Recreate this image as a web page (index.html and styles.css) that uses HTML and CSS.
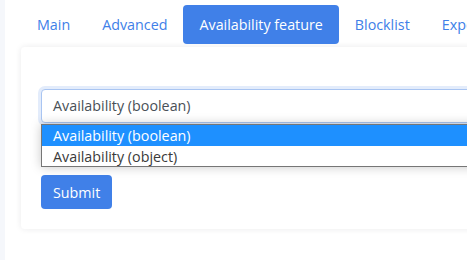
FILE: index.html
```html
<!DOCTYPE html>
<html lang="en">
<head>
<meta charset="utf-8">
<title>Availability feature</title>
<link rel="stylesheet" href="styles.css">
</head>
<body>
<div class="page">
  <div class="edge"></div>
  <main class="content">
    <ul class="tabs">
      <li><a class="tab" href="#">Main</a></li>
      <li><a class="tab" href="#">Advanced</a></li>
      <li><a class="tab active" href="#">Availability feature</a></li>
      <li><a class="tab" href="#">Blocklist</a></li>
      <li><a class="tab" href="#">Experimental</a></li>
    </ul>
    <section class="card">
      <form class="form">
        <div class="field">
          <div class="select">Availability (boolean)</div>
          <div class="popup">
            <div class="option selected">Availability (boolean)</div>
            <div class="option">Availability (object)</div>
          </div>
        </div>
        <button type="button" class="btn">Submit</button>
      </form>
    </section>
  </main>
</div>
</body>
</html>
```
FILE: styles.css
```css
html, body {
  margin: 0;
  padding: 0;
  background: #ffffff;
  overflow: hidden;
}
body {
  font-family: "Open Sans", "Noto Sans", "Liberation Sans", sans-serif;
  font-size: 14.3px;
  color: #495057;
}
.page {
  display: flex;
  width: 700px;
  height: 260px;
}
.edge {
  width: 5px;
  flex: none;
  background: #f5f7fb;
}
.content {
  flex: 1;
  padding: 5px 0 0 16px;
  background: #ffffff;
}
.tabs {
  list-style: none;
  margin: 0;
  padding: 0;
  display: flex;
}
.tab {
  display: block;
  padding: 0 16px;
  height: 39px;
  line-height: 39px;
  color: #4080e8;
  text-decoration: none;
  border-radius: 4px;
}
.tab.active {
  background: #4080e8;
  color: #ffffff;
}
.card {
  margin-top: 3px;
  background: #ffffff;
  border-radius: 4px;
  box-shadow: 0 0 6px rgba(33, 37, 41, 0.09);
  padding: 42px 20px 20px 20px;
}
.form {
  display: flex;
  flex-direction: column;
  align-items: flex-start;
}
.field {
  position: relative;
  align-self: stretch;
  margin-bottom: 52px;
}
.select {
  height: 32px;
  line-height: 32px;
  padding-left: 11px;
  border: 1px solid #a9c5f2;
  border-radius: 4px;
  box-shadow: 0 0 0 3px #e3ecfb;
  color: #495057;
  background: #ffffff;
}
.popup {
  position: absolute;
  left: 0;
  right: 0;
  top: 35px;
  background: #ffffff;
  border: 1px solid #767676;
  box-shadow: 0 0 10px rgba(0, 0, 0, 0.22);
  z-index: 2;
}
.option {
  height: 21px;
  line-height: 21px;
  padding-left: 11px;
  color: #3a3a3a;
}
.option + .option {
  height: 20px;
}
.option.selected {
  background: #1e90ff;
  color: #ffffff;
}
.btn {
  font: inherit;
  font-size: 14.3px;
  height: 34px;
  padding: 0 12px;
  border: 0;
  border-radius: 4px;
  background: #4080e8;
  color: #ffffff;
}
```
